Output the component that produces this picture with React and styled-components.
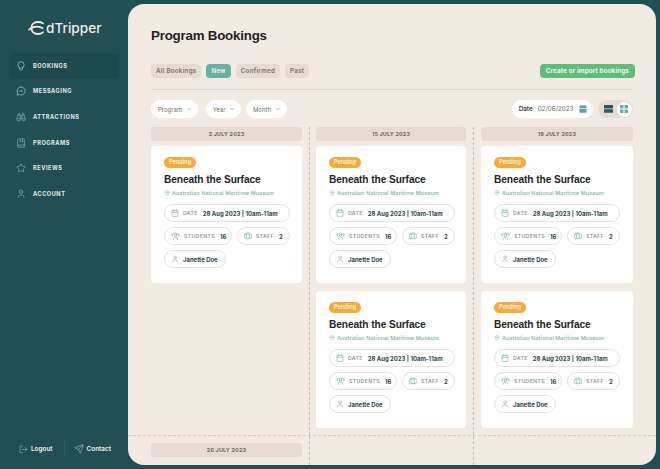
import React from 'react';
import styled, { createGlobalStyle } from 'styled-components';
import {
  Binoculars, BookMarked, Briefcase, Calendar, ChevronDown, LogOut,
  MapPin, Send, Star, User
} from 'lucide-react';

const GlobalStyle = createGlobalStyle`
  html, body {
    margin: 0;
    height: 100%;
    overflow: hidden;
    background: #214f53;
  }
  body {
    font-family: Inter, "Liberation Sans", sans-serif;
  }
`;

const Shell = styled.div`
  width: 660px;
  height: 469px;
  display: flex;
  background: #214f53;
  padding: 4px 4px 4px 0;
  box-sizing: border-box;
`;

const Sidebar = styled.aside`
  width: 128px;
  flex-shrink: 0;
  display: flex;
  flex-direction: column;
`;

const Logo = styled.div`
  display: flex;
  align-items: center;
  height: 20px;
  margin: 14px 0 0 28px;
  color: #f3ebe4;
  font-family: Inter, sans-serif;
  font-size: 13.6px;
  font-weight: 500;
`;

const Nav = styled.nav`
  display: flex;
  flex-direction: column;
  margin: 15px 9px 0 10px;
`;

const NavItem = styled.a`
  height: 25.6px;
  display: flex;
  align-items: center;
  gap: 7px;
  padding-left: 6px;
  border-radius: 4px;
  background: ${p => (p.$active ? '#1f4a4d' : 'transparent')};
  color: #e6ebe7;
  font-size: 5.6px;
  font-weight: 700;
  letter-spacing: 0.55px;
  text-transform: uppercase;
  svg {
    color: #79a8a2;
  }
`;

const SideFooter = styled.div`
  margin-top: auto;
  height: 32px;
  display: flex;
  align-items: center;
  padding-left: 19px;
`;

const FooterLink = styled.a`
  display: flex;
  align-items: center;
  gap: 3px;
  color: #eef0ec;
  font-size: 6.4px;
  font-weight: 600;
  padding-right: ${p => (p.$first ? '11px' : '0')};
  margin-right: ${p => (p.$first ? '9px' : '0')};
  border-right: ${p => (p.$first ? '1px solid #2e5d60' : 'none')};
  height: 16px;
  svg {
    color: #9dbcb7;
  }
`;

const Main = styled.main`
  flex: 1;
  background: #f2ebe4;
  border-radius: 16px;
  overflow: hidden;
  display: flex;
  flex-direction: column;
`;

const Head = styled.div`
  padding: 0 23px;
`;

const Title = styled.h1`
  margin: 23px 0 0;
  height: 18px;
  line-height: 18px;
  font-family: "Liberation Sans", sans-serif;
  font-size: 13.3px;
  font-weight: 700;
  letter-spacing: -0.2px;
  color: #222;
`;

const TabRow = styled.div`
  display: flex;
  align-items: center;
  justify-content: space-between;
  margin-top: 19px;
  padding-bottom: 11px;
  border-bottom: 1px solid #e2d9d1;
`;

const Tabs = styled.div`
  display: flex;
  gap: 5px;
`;

const Tab = styled.span`
  height: 14px;
  line-height: 14px;
  padding: 0 5px;
  border-radius: 4px;
  font-size: 6.2px;
  font-weight: 600;
  letter-spacing: 0.28px;
  background: ${p => (p.$active ? '#6aaea3' : '#e6dcd3')};
  color: ${p => (p.$active ? '#f4f7f4' : '#77706a')};
`;

const CreateButton = styled.button`
  height: 14px;
  margin: 0 -2px 0 0;
  padding: 0 6px;
  border: none;
  border-radius: 4px;
  background: #62bb78;
  color: #effaf0;
  font-family: inherit;
  font-size: 6.3px;
  font-weight: 700;
  letter-spacing: 0.12px;
`;

const FilterRow = styled.div`
  display: flex;
  align-items: center;
  margin-top: 10px;
  height: 18px;
`;

const Pill = styled.div`
  height: 18px;
  display: flex;
  align-items: center;
  gap: 4px;
  padding: 0 5.5px 0 7px;
  margin-right: ${p => p.$mr || 0}px;
  border-radius: 9px;
  background: #fff;
  font-size: 6px;
  color: #6f6f6c;
`;

const DatePill = styled(Pill)`
  padding: 0 6.5px;
  gap: 5px;
  font-size: 6.3px;
`;

const Spacer = styled.div`
  flex: 1;
`;

const DateLabel = styled.b`
  font-weight: 600;
  color: #444;
`;

const Toggle = styled.div`
  display: flex;
  align-items: center;
  justify-content: space-between;
  height: 18px;
  width: 35px;
  padding: 0 1.5px 0 6px;
  box-sizing: border-box;
  background: #e6dcd3;
  border-radius: 9px;
  margin-left: 5px;
  color: #2a5a5d;
`;

const ToggleOn = styled.span`
  width: 15px;
  height: 15px;
  border-radius: 50%;
  background: #fff;
  display: flex;
  align-items: center;
  justify-content: center;
  color: #6aaea3;
`;

const Board = styled.div`
  flex: 1;
  min-height: 0;
  margin-top: 9px;
  display: flex;
  flex-direction: column;
`;

const Columns = styled.div`
  height: 308px;
  flex-shrink: 0;
  display: grid;
  grid-template-columns: 182px 164px 182px;
  border-bottom: 1px dashed #d6cbc1;
`;

const Column = styled.div`
  display: flex;
  flex-direction: column;
  gap: 8px;
  padding: 0 ${p => p.$right}px 0 ${p => p.$left}px;
  border-right: ${p => (p.$last ? 'none' : '1px dashed #c9bdb2')};
  min-width: 0;
  box-sizing: border-box;
`;

const DateHead = styled.div`
  height: 14px;
  line-height: 14px;
  flex-shrink: 0;
  border-radius: 3px;
  background: #e6dcd3;
  text-align: center;
  font-size: 5.4px;
  font-weight: 700;
  letter-spacing: 0.2px;
  color: #6f6963;
  margin-bottom: -3px;
`;

const Footer = styled.div`
  flex: 1;
  display: grid;
  grid-template-columns: 182px 164px 182px;
`;

const FooterCell = styled.div`
  padding: 7px ${p => p.$right}px 0 ${p => p.$left}px;
  border-right: ${p => (p.$last ? 'none' : '1px dashed #c9bdb2')};
  box-sizing: border-box;
`;

const Card = styled.article`
  height: 137px;
  flex-shrink: 0;
  box-sizing: border-box;
  border-radius: 4px;
  background: #fff;
  padding: 11px 0 0 13px;
`;

const Badge = styled.span`
  display: block;
  width: fit-content;
  height: 11px;
  line-height: 11px;
  padding: 0 5px;
  border-radius: 6px;
  background: #f5ab3b;
  color: #fdf3e2;
  font-size: 5.6px;
  font-weight: 600;
`;

const CardTitle = styled.h2`
  margin: 5px 0 0;
  height: 14px;
  line-height: 14px;
  font-family: "Liberation Sans", sans-serif;
  font-size: 10.2px;
  font-weight: 700;
  letter-spacing: -0.1px;
  color: #252525;
`;

const Venue = styled.div`
  display: flex;
  align-items: center;
  gap: 2px;
  margin-top: 1px;
  height: 10px;
  font-size: 5.4px;
  font-weight: 600;
  letter-spacing: 0.12px;
  color: #8dbbb2;
`;

const Chips = styled.div`
  display: flex;
  flex-wrap: wrap;
  gap: 5px;
  width: 126px;
  margin-top: 6px;
`;

const Chip = styled.div`
  height: 18px;
  display: flex;
  align-items: center;
  box-sizing: border-box;
  width: ${p => p.$w}px;
  padding-left: 6px;
  gap: 4px;
  border: 1px solid #e4e2dd;
  border-radius: 9px;
  white-space: nowrap;
  svg {
    color: #7eaba4;
    flex-shrink: 0;
  }
`;

const ChipLabel = styled.span`
  color: #8a9a98;
  font-size: 5.2px;
  font-weight: 600;
  letter-spacing: 0.33px;
  margin-right: 1px;
`;

const Strong = styled.span`
  font-size: 5.95px;
  font-weight: 700;
  color: #2f4749;
`;

function BulbPinIcon() {
  return (
    <svg width="10" height="10" viewBox="0 0 12 12" fill="none" stroke="currentColor" strokeWidth="1.2" strokeLinejoin="round">
      <circle cx="6" cy="4.6" r="3.8" />
      <path d="M4.2 8v2.2L6 11.2l1.8-1V8" />
    </svg>
  );
}

function ChatIcon() {
  return (
    <svg width="10" height="10" viewBox="0 0 12 12" fill="none" stroke="currentColor" strokeWidth="1.2" strokeLinecap="round" strokeLinejoin="round">
      <path d="M6.2 1.200a4.800 4.800 0 1 1-2.300 9L1.200 11l.7-2.600a4.800 4.800 0 0 1 4.300-7.200z" />
      <path d="M4.200 6h3.800" />
    </svg>
  );
}

function GroupIcon() {
  return (
    <svg width="9" height="8" viewBox="0 0 12 10" fill="none" stroke="currentColor" strokeWidth="1.1" strokeLinecap="round">
      <circle cx="6" cy="3" r="1.8" />
      <path d="M3 9.200c.2-2 1.500-2.900 3-2.900s2.800.9 3 2.900" />
      <path d="M2.600 1.400C1.500 1.700 1 2.600 1 3.400s.5 1.500 1.200 1.800M9.400 1.400c1.100.3 1.600 1.200 1.600 2s-.5 1.500-1.200 1.800" />
    </svg>
  );
}

function RowsIcon() {
  return (
    <svg width="9" height="8" viewBox="0 0 9 8" fill="currentColor">
      <rect x="0" y="0" width="9" height="3.400" rx="0.5" />
      <rect x="0" y="4.300" width="9" height="3.400" rx="0.5" />
    </svg>
  );
}

function GridIcon() {
  return (
    <svg width="8" height="8" viewBox="0 0 8 8" fill="currentColor">
      <rect x="0" y="0" width="3.500" height="3.500" rx="0.4" />
      <rect x="4.500" y="0" width="3.500" height="3.500" rx="0.4" />
      <rect x="0" y="4.500" width="3.500" height="3.500" rx="0.4" />
      <rect x="4.500" y="4.500" width="3.500" height="3.500" rx="0.4" />
    </svg>
  );
}

function DateIcon() {
  return (
    <svg width="8" height="8" viewBox="0 0 8 8" fill="#5f9f97">
      <rect x="0.500" y="0.500" width="7" height="2.500" rx="0.5" />
      <rect x="0.500" y="3.700" width="7" height="4" rx="0.5" />
    </svg>
  );
}

function LogoMark() {
  return (
    <svg width="18" height="14" viewBox="0 0 18 14" fill="none" stroke="currentColor" strokeWidth="1.800" strokeLinecap="round">
      <path d="M15 2.200C13.400 1.300 12 1 10 1 6 1 3.400 3.600 3.400 7s2.600 6 6.600 6c1.900 0 3.500-.5 5-1.700" />
      <path d="M1.200 8.600C4.500 5.400 10 5.200 14.500 7" />
    </svg>
  );
}

const navItems = [
  { label: 'Bookings', icon: BulbPinIcon, active: true },
  { label: 'Messaging', icon: ChatIcon },
  { label: 'Attractions', icon: Binoculars },
  { label: 'Programs', icon: BookMarked },
  { label: 'Reviews', icon: Star },
  { label: 'Account', icon: User }
];

function BookingCard() {
  return (
    <Card>
      <Badge>Pending</Badge>
      <CardTitle>Beneath the Surface</CardTitle>
      <Venue>
        <MapPin size={6} strokeWidth={2.2} />
        Australian National Maritime Museum
      </Venue>
      <Chips>
        <Chip $w={126}>
          <Calendar size={8} strokeWidth={1.8} />
          <ChipLabel>DATE</ChipLabel>
          <Strong>28 Aug 2023 | 10am-11am</Strong>
        </Chip>
        <Chip $w={68}>
          <GroupIcon />
          <ChipLabel>STUDENTS</ChipLabel>
          <Strong>16</Strong>
        </Chip>
        <Chip $w={53}>
          <Briefcase size={8} strokeWidth={1.8} />
          <ChipLabel>STAFF</ChipLabel>
          <Strong>2</Strong>
        </Chip>
        <Chip $w={62}>
          <User size={8} strokeWidth={1.8} />
          <Strong>Janette Doe</Strong>
        </Chip>
      </Chips>
    </Card>
  );
}

export default function App() {
  return (
    <>
      <GlobalStyle />
      <Shell>
        <Sidebar>
          <Logo>
            <LogoMark />
            <span>dTripper</span>
          </Logo>
          <Nav>
            {navItems.map(({ label, icon: Icon, active }) => (
              <NavItem key={label} $active={active}>
                <Icon size={10} strokeWidth={1.9} />
                {label}
              </NavItem>
            ))}
          </Nav>
          <SideFooter>
            <FooterLink $first>
              <LogOut size={9} strokeWidth={1.6} />
              Logout
            </FooterLink>
            <FooterLink>
              <Send size={10} strokeWidth={1.5} />
              Contact
            </FooterLink>
          </SideFooter>
        </Sidebar>
        <Main>
          <Head>
            <Title>Program Bookings</Title>
            <TabRow>
              <Tabs>
                <Tab>All Bookings</Tab>
                <Tab $active>New</Tab>
                <Tab>Confirmed</Tab>
                <Tab>Past</Tab>
              </Tabs>
              <CreateButton>Create or import bookings</CreateButton>
            </TabRow>
            <FilterRow>
              <Pill $mr={8}>Program <ChevronDown size={6} strokeWidth={2} /></Pill>
              <Pill $mr={5}>Year <ChevronDown size={6} strokeWidth={2} /></Pill>
              <Pill>Month <ChevronDown size={6} strokeWidth={2} /></Pill>
              <Spacer />
              <DatePill>
                <DateLabel>Date</DateLabel> 02/06/2023
                <DateIcon />
              </DatePill>
              <Toggle>
                <RowsIcon />
                <ToggleOn><GridIcon /></ToggleOn>
              </Toggle>
            </FilterRow>
          </Head>
          <Board>
            <Columns>
              <Column $left={23} $right={7}>
                <DateHead>2 JULY 2023</DateHead>
                <BookingCard />
              </Column>
              <Column $left={6} $right={7}>
                <DateHead>15 JULY 2023</DateHead>
                <BookingCard />
                <BookingCard />
              </Column>
              <Column $left={7} $right={23} $last>
                <DateHead>19 JULY 2023</DateHead>
                <BookingCard />
                <BookingCard />
              </Column>
            </Columns>
            <Footer>
              <FooterCell $left={23} $right={7}>
                <DateHead>26 JULY 2023</DateHead>
              </FooterCell>
              <FooterCell $left={6} $right={7} />
              <FooterCell $left={7} $right={23} $last />
            </Footer>
          </Board>
        </Main>
      </Shell>
    </>
  );
}
